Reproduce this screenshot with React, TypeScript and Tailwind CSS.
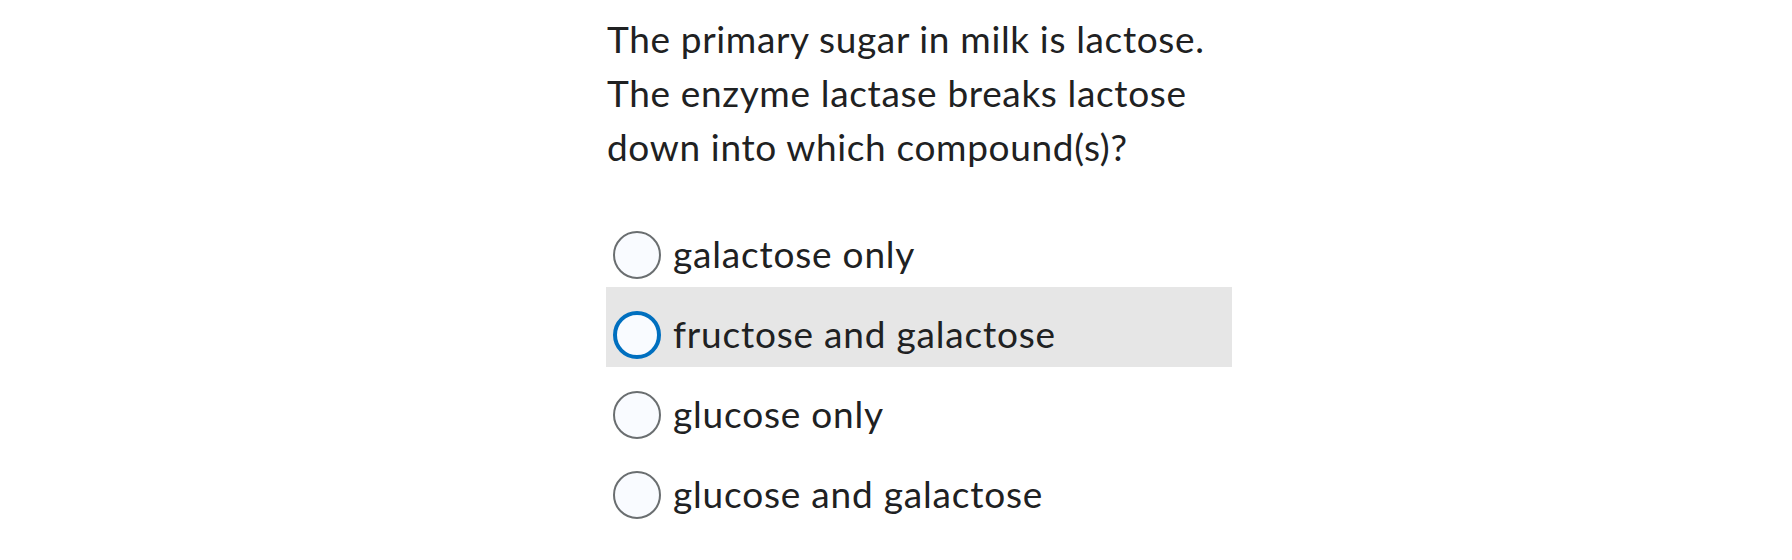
import React from "react";

const options = [
  { label: "galactose only", focused: false },
  { label: "fructose and galactose", focused: true },
  { label: "glucose only", focused: false },
  { label: "glucose and galactose", focused: false },
];

export default function App() {
  return (
    <div
      className="w-[1792px] h-[560px] bg-white text-[#202122] overflow-hidden"
      style={{ fontFamily: "Lato, 'Noto Sans', sans-serif" }}
    >
      <div className="ml-[606px] w-[626px] pt-[12px]">
        <p className="pl-[1px] text-[37px] leading-[54px] tracking-[0.65px] pr-[10px]">
          The primary sugar in milk is lactose. The enzyme lactase breaks lactose down into which compound(s)?
        </p>
        <div className="mt-[33px] flex flex-col">
          {options.map((o) => (
            <label
              key={o.label}
              className={`h-[80px] flex items-end pb-[4px] pl-[7px] ${o.focused ? "bg-[#e6e6e6]" : ""}`}
            >
              <div className="flex items-center gap-[12px]">
                <span
                  className={`w-[48px] h-[48px] rounded-full bg-[#f9fbff] shrink-0 ${
                    o.focused ? "border-[4px] border-[#006fbf]" : "border-[2px] border-[#6a6e70]"
                  }`}
                />
                <span className="text-[37px] leading-[54px] tracking-[0.8px] mb-[2px]">{o.label}</span>
              </div>
            </label>
          ))}
        </div>
      </div>
    </div>
  );
}
